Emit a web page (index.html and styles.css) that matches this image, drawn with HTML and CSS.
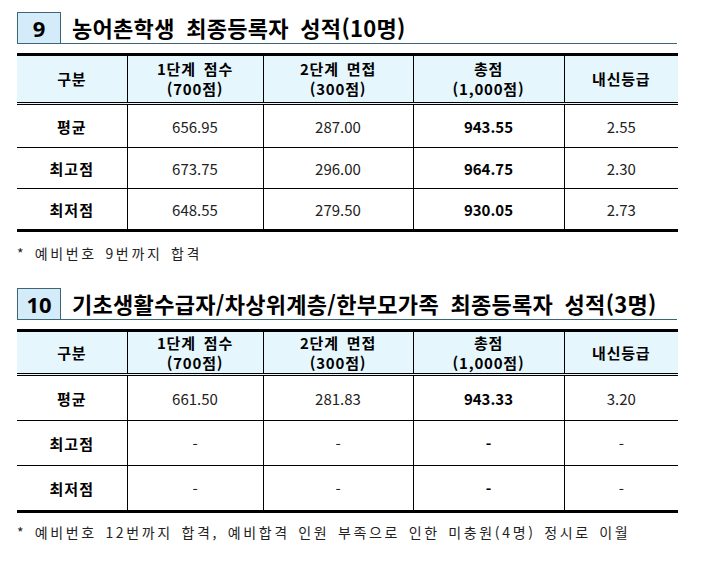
FILE: index.html
```html
<!DOCTYPE html>
<html lang="ko">
<head>
<meta charset="utf-8">
<link rel="stylesheet" href="styles.css">
</head>
<body>
<div class="page">
  <section class="sec sec1">
    <div class="title">
      <div class="num">9</div>
      <h2 class="ttl">농어촌학생 최종등록자 성적(10명)</h2>
    </div>
    <table class="grid">
      <colgroup><col class="c1"><col class="c2"><col class="c3"><col class="c4"><col class="c5"></colgroup>
      <thead>
        <tr><th>구분</th><th>1단계 점수<br>(700점)</th><th>2단계 면접<br>(300점)</th><th>총점<br>(1,000점)</th><th>내신등급</th></tr>
      </thead>
      <tbody>
        <tr class="r1"><td class="lbl">평균</td><td>656.95</td><td>287.00</td><td class="b">943.55</td><td>2.55</td></tr>
        <tr class="r2"><td class="lbl">최고점</td><td>673.75</td><td>296.00</td><td class="b">964.75</td><td>2.30</td></tr>
        <tr class="r3"><td class="lbl">최저점</td><td>648.55</td><td>279.50</td><td class="b">930.05</td><td>2.73</td></tr>
      </tbody>
    </table>
    <p class="note">* 예비번호 9번까지 합격</p>
  </section>
  <section class="sec sec2">
    <div class="title">
      <div class="num">10</div>
      <h2 class="ttl">기초생활수급자/차상위계층/한부모가족 최종등록자 성적(3명)</h2>
    </div>
    <table class="grid">
      <colgroup><col class="c1"><col class="c2"><col class="c3"><col class="c4"><col class="c5"></colgroup>
      <thead>
        <tr><th>구분</th><th>1단계 점수<br>(700점)</th><th>2단계 면접<br>(300점)</th><th>총점<br>(1,000점)</th><th>내신등급</th></tr>
      </thead>
      <tbody>
        <tr><td class="lbl">평균</td><td>661.50</td><td>281.83</td><td class="b">943.33</td><td>3.20</td></tr>
        <tr><td class="lbl">최고점</td><td>-</td><td>-</td><td class="b">-</td><td>-</td></tr>
        <tr><td class="lbl">최저점</td><td>-</td><td>-</td><td class="b">-</td><td>-</td></tr>
      </tbody>
    </table>
    <p class="note">* 예비번호 12번까지 합격, 예비합격 인원 부족으로 인한 미충원(4명) 정시로 이월</p>
  </section>
</div>
</body>
</html>
```
FILE: styles.css
```css
html, body { margin: 0; padding: 0; background: #fff; }
body { font-family: "Noto Sans CJK KR", "Noto Sans", sans-serif; color: #000; }
.page { padding: 12px 0 0 17px; width: 661px; }
.title { display: flex; align-items: stretch; height: 31px; border-bottom: 1px solid #3d6675; width: 660px; }
.num { width: 44px; background: #d4ecf9; border: 1px solid #3d6675; border-bottom: none; box-sizing: border-box; display: flex; align-items: center; justify-content: center; font-weight: 700; font-size: 22px; font-family: "Noto Sans", "Noto Sans CJK KR", sans-serif; }
.ttl { margin: 0 0 0 11px; font-size: 22px; font-weight: 700; line-height: 31px; word-spacing: 5px; letter-spacing: 0.3px; }
.grid { border-collapse: collapse; width: 661px; table-layout: fixed; margin-top: 9px; }
.c1 { width: 110px; } .c2 { width: 136px; } .c3 { width: 150px; } .c4 { width: 151px; } .c5 { width: 114px; }
.grid th { background: #e6f6fd; font-size: 15px; font-weight: 700; line-height: 20px; letter-spacing: 0.8px; word-spacing: 3px; border-top: 3px solid #000; border-bottom: 3px double #000; border-left: 1px solid #000; padding: 0; height: 46px; }
.grid td { text-align: center; font-size: 15px; border-left: 1px solid #000; border-top: 1px solid #000; padding: 0; height: 40px; color: #222; }
.grid th:first-child, .grid td:first-child { border-left: none; }
.grid tbody tr:last-child td { border-bottom: 3px solid #000; }
.grid td.lbl { font-weight: 700; color: #000; font-size: 15px; letter-spacing: 1px; }
.grid td.b { font-weight: 700; color: #000; }
.sec1 .grid tbody td { height: 40px; }
.sec1 .grid tr.r1 td { height: 42px; }
.sec2 .grid th { height: 41px; }
.sec2 .grid tbody td { height: 44px; }
.note { margin: 0; font-size: 14px; letter-spacing: 2.65px; word-spacing: 2px; color: #222; line-height: 20px; }
.sec1 .note { padding-top: 11px; height: 45px; }
.sec2 .note { padding-top: 9px; }
```
